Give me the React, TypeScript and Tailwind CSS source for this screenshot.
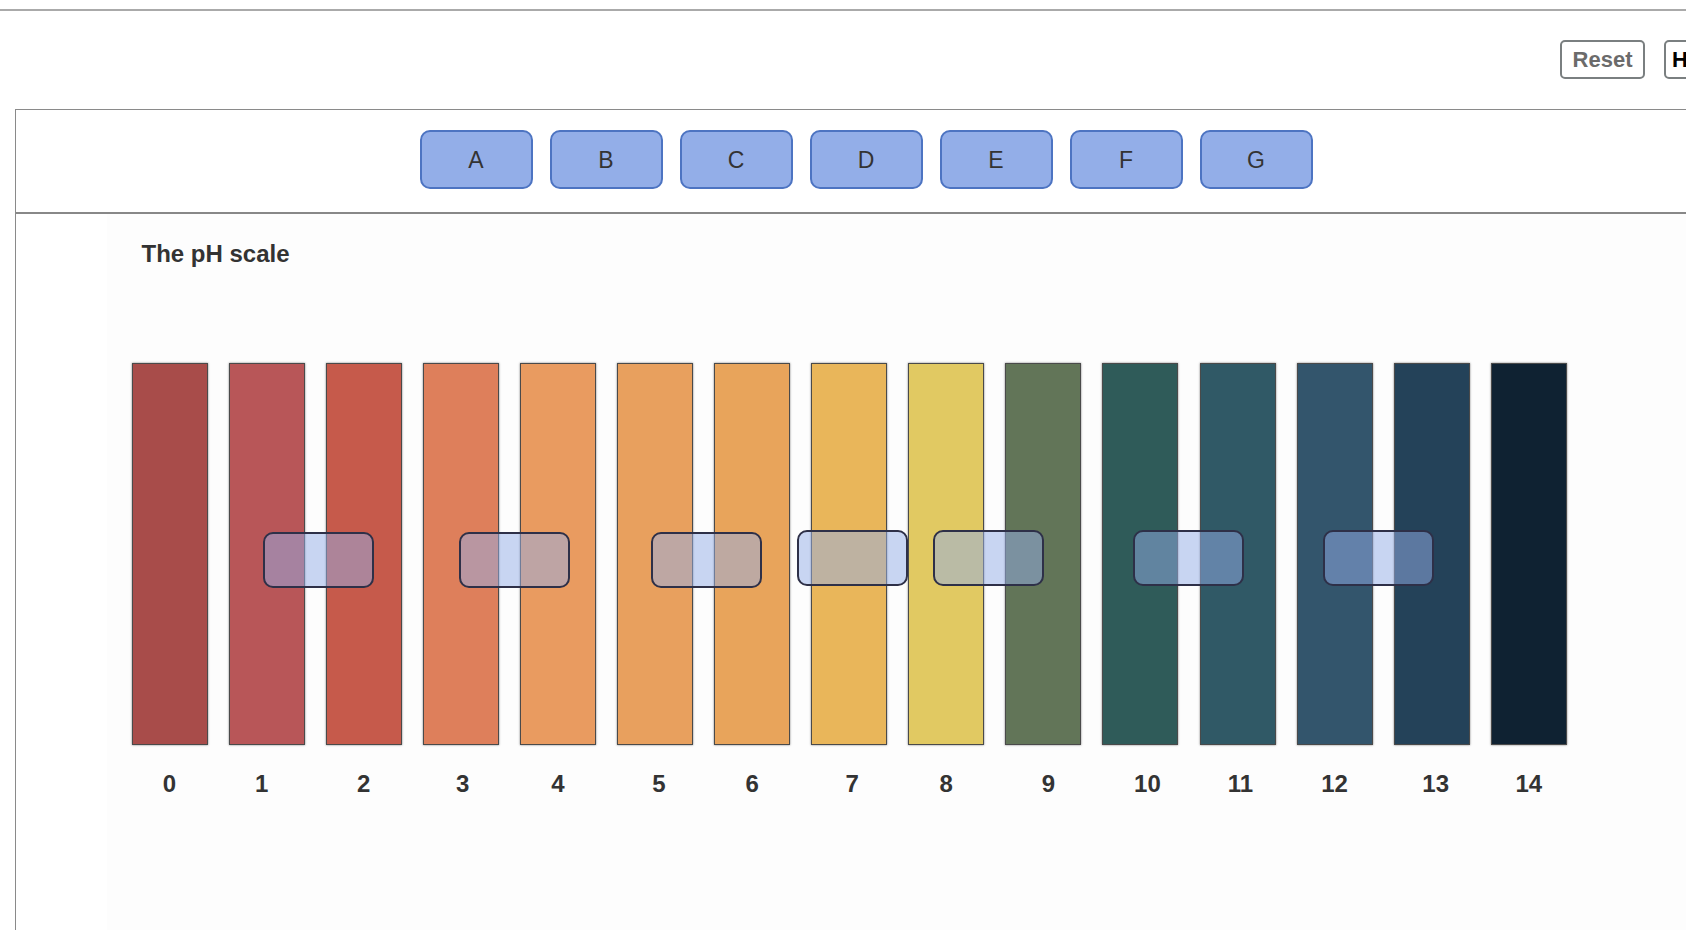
import React from "react";

const bars = [
  "bg-[#a84c4a]",
  "bg-[#b85658]",
  "bg-[#c65a4b]",
  "bg-[#de7f5b]",
  "bg-[#e99b60]",
  "bg-[#e8a05e]",
  "bg-[#e8a45b]",
  "bg-[#e9b65a]",
  "bg-[#e1c962]",
  "bg-[#627558]",
  "bg-[#2f5b59]",
  "bg-[#305966]",
  "bg-[#33556c]",
  "bg-[#244259]",
  "bg-[#0f2232]",
];

const labelShift = [
  "",
  "-translate-x-[5px]",
  "",
  "translate-x-[2px]",
  "",
  "translate-x-[4px]",
  "",
  "translate-x-[3px]",
  "",
  "translate-x-[5px]",
  "translate-x-[7px]",
  "translate-x-[3px]",
  "",
  "translate-x-[4px]",
  "",
];

const overlays = [
  "left-[263px] top-[532px]",
  "left-[459px] top-[532px]",
  "left-[651px] top-[532px]",
  "left-[797px] top-[530px]",
  "left-[933px] top-[530px]",
  "left-[1133px] top-[530px]",
  "left-[1323px] top-[530px]",
];

export default function App() {
  return (
    <div className="relative w-[1686px] h-[930px] overflow-hidden bg-white font-['Liberation_Sans',Arial,sans-serif]">
      <div className="h-[9px]" />
      <div className="h-[2px] bg-[#aaaaaa]" />
      <div className="flex h-[98px] pt-[29px] pl-[1560px] gap-[19px]">
        <button className="shrink-0 w-[85px] h-[39px] rounded-[5px] border-2 border-[#7a7f80] text-[22px] leading-none font-bold text-[#6b6b6b]">
          Reset
        </button>
        <button className="shrink-0 w-[85px] h-[39px] rounded-[5px] border-2 border-[#7a7f80] text-[22px] leading-none font-bold text-black text-left pl-[6px]">
          Hint
        </button>
      </div>
      <div className="ml-[15px] w-[1701px] h-[830px] border-l border-t border-[#8a8a8a] flex flex-col">
        <div className="h-[104px] pt-[20px] border-b-2 border-[#888888] flex justify-center gap-[17px]">
          {["A", "B", "C", "D", "E", "F", "G"].map((l) => (
            <button
              key={l}
              className="w-[113px] h-[59px] rounded-[10px] border-2 border-[#4d74c2] bg-[#93aee8] text-[23px] leading-none text-[#333333] pt-[2px]"
            >
              {l}
            </button>
          ))}
        </div>
        <div className="flex-1 flex">
          <div className="ml-[91px] flex-1 bg-[#fdfdfd] pl-[24.5px] pt-[28px]">
            <div className="ml-[10px] text-[24px] leading-none font-bold text-[#333333]">
              The pH scale
            </div>
            <div className="mt-[97px] flex gap-[21.1px]">
              {bars.map((c, i) => (
                <div
                  key={i}
                  className={`w-[76px] h-[382px] border-[1.5px] border-[#4a4a4a] shadow-[0_0_2px_rgba(0,0,0,0.5)] ${c}`}
                />
              ))}
            </div>
            <div className="mt-[27px] flex gap-[21.1px]">
              {bars.map((_, i) => (
                <div
                  key={i}
                  className={`w-[76px] text-center text-[24px] leading-none font-bold text-[#333333] ${labelShift[i]}`}
                >
                  {i}
                </div>
              ))}
            </div>
          </div>
        </div>
      </div>
      {overlays.map((p, i) => (
        <div
          key={i}
          className={`absolute w-[111px] h-[56px] rounded-[10px] border-2 border-[#2e3048] bg-[#93aee8]/50 ${p}`}
        />
      ))}
    </div>
  );
}
